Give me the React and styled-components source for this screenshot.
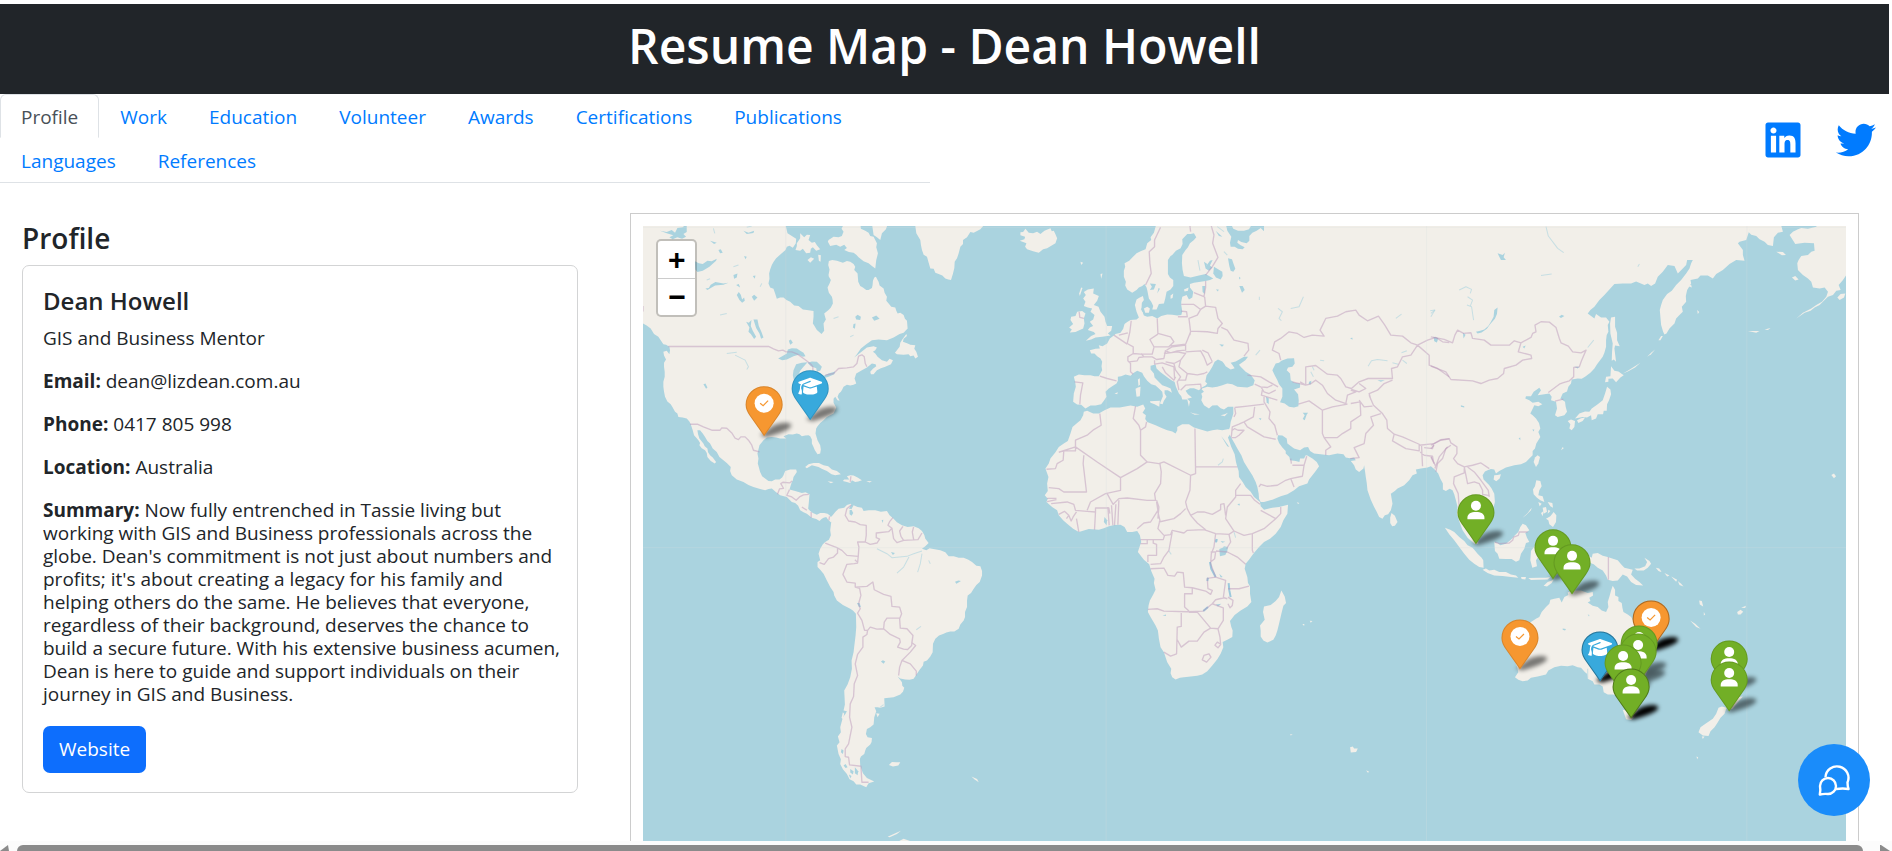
import React from "react";
import styled, { createGlobalStyle } from "styled-components";

import { FaLinkedin, FaTwitter } from "react-icons/fa";
import { FaGraduationCap } from "react-icons/fa6";

const GlobalStyle = createGlobalStyle`
  *,
  *::before,
  *::after {
    box-sizing: border-box;
  }

  body {
    margin: 0;
    background-color: #fff;
    color: #212529;
    font-family: "Segoe UI", "Open Sans", "Noto Sans", sans-serif;
    font-size: 19px;
    line-height: 23px;
  }
`;

const Page = styled.div`
  display: flex;
  flex-direction: column;
  height: 100vh;
  overflow: hidden;
`;

const Header = styled.header`
  flex: none;
  margin: 4px 3px 0 0;
  padding: 12px 0 18px;
  background-color: #212529;
  color: #fff;
  text-align: center;
`;

const Title = styled.h1`
  margin: 0;
  font-size: 48px;
  font-weight: 600;
  line-height: 60px;
`;

const TopBar = styled.div`
  display: flex;
  flex: none;
  align-items: flex-start;
  justify-content: space-between;
`;

const Tabs = styled.nav`
  display: flex;
  flex-wrap: wrap;
  width: calc(50% - 16px);
  border-bottom: 1px solid #dee2e6;
`;

const Tab = styled.a`
  height: 44px;
  padding: 11px 20px 9px;
  border: 1px solid ${({ $active }) => ($active ? "#dee2e6" : "transparent")};
  border-bottom-color: transparent;
  border-radius: 6px 6px 0 0;
  color: ${({ $active }) => ($active ? "#495057" : "#007bff")};
  text-decoration: none;
`;

const Social = styled.div`
  display: flex;
  gap: 33px;
  padding: 26px 16px 0 0;
`;

const SocialLink = styled.a`
  display: flex;
  color: #007bff;
  font-size: 40px;
`;

const Main = styled.main`
  display: grid;
  flex: 1;
  grid-template-columns: 1fr 2fr;
  min-height: 0;
  padding: 30px 3px 0 0;
  overflow: hidden;
`;

const Sidebar = styled.section`
  padding: 6px 52px 0 22px;
`;

const SectionTitle = styled.h3`
  margin: 0 0 8px;
  font-size: 28px;
  font-weight: 600;
  line-height: 38px;
`;

const Card = styled.article`
  padding: 20px 12px 19px 20px;
  border: 1px solid #d3d4d5;
  border-radius: 7px;
`;

const CardTitle = styled.h5`
  margin: 0 0 11px;
  font-size: 24px;
  font-weight: 600;
  line-height: 30px;
`;

const Text = styled.p`
  margin: 0 0 20px;
`;

const WebsiteButton = styled.a`
  display: inline-block;
  padding: 12px 16px;
  border-radius: 7px;
  background-color: #0d6efd;
  color: #fff;
  text-decoration: none;
`;

const MapPanel = styled.section`
  margin-right: 30px;
  padding: 12px;
  border: 1px solid #ccc;
  border-bottom: 0;
  overflow: hidden;
`;

const MapCanvas = styled.div`
  position: relative;
  background-color: #aad3df;

  > svg {
    display: block;
    width: 100%;
  }
`;

const ZoomControl = styled.div`
  position: absolute;
  top: 13px;
  left: 13px;
  display: flex;
  flex-direction: column;
  border: 2px solid rgba(0, 0, 0, 0.2);
  border-radius: 5px;
  background-clip: padding-box;
  background-color: #fff;
`;

const ZoomButton = styled.button`
  width: 37px;
  height: 37px;
  padding: 4px 0 0 1px;
  border: 0;
  background: none;
  color: #000;
  font: bold 30px/32px "Liberation Mono", monospace;
  cursor: pointer;

  & + & {
    border-top: 1px solid #ccc;
  }
`;

const ChatButton = styled.button`
  position: fixed;
  right: 22px;
  bottom: 35px;
  display: flex;
  align-items: center;
  justify-content: center;
  width: 72px;
  height: 72px;
  padding: 0;
  border: 0;
  border-radius: 50%;
  background-color: #1a8cfa;
  cursor: pointer;
`;

const ScrollTrack = styled.div`
  display: flex;
  flex: none;
  align-items: flex-end;
  justify-content: space-between;
  height: 10px;
  padding: 0 2px 0 0;
  background-color: #fcfcfc;

  svg {
    flex: none;
  }
`;

const ScrollThumb = styled.div`
  flex: 1;
  height: 6px;
  margin: 0 17px 0 8px;
  border-radius: 6px 6px 0 0;
  background-color: #8b8b8b;
`;

const tabs = [
  "Profile",
  "Work",
  "Education",
  "Volunteer",
  "Awards",
  "Certifications",
  "Publications",
  "Languages",
  "References",
];

const details = [
  { label: "Email", value: "dean@lizdean.com.au" },
  { label: "Phone", value: "0417 805 998" },
  { label: "Location", value: "Australia" },
  {
    label: "Summary",
    value:
      "Now fully entrenched in Tassie living but working with GIS and Business professionals across the globe. Dean's commitment is not just about numbers and profits; it's about creating a legacy for his family and helping others do the same. He believes that everyone, regardless of their background, deserves the chance to build a secure future. With his extensive business acumen, Dean is here to guide and support individuals on their journey in GIS and Business.",
  },
];

// Each region keeps its own origin, in thirds of a map pixel
const regions = [
  {
    name: "north-america",
    origin: [-69, -78],
    land: [
      "69 70 495 70 502 100 515 108 528 116 527 130 518 143 508 137 500 140 496 150 490 155 478 166 468 175 460 186 455 195 450 208 447 220 448 236 445 250 450 262 460 266 465 280 470 296 480 292 490 292 499 300 510 305 522 316 535 318 548 328 560 330 580 333 580 350 578 370 582 376 590 390 604 402 612 392 610 370 617 358 614 348 612 340 625 330 632 322 638 310 637 298 635 290 626 278 622 262 628 250 632 240 626 230 625 225 628 208 624 195 626 183 636 180 650 182 668 188 680 183 690 185 700 192 705 200 702 210 712 220 714 245 720 258 728 262 738 270 745 270 755 264 757 255 758 242 762 232 767 230 772 240 775 245 778 256 790 265 793 278 800 290 798 302 805 310 813 320 825 322 828 332 832 340 840 338 850 345 854 356 860 362 862 385 850 398 838 402 820 412 800 420 775 418 755 420 738 432 722 445 710 462 702 472 720 458 740 442 760 438 770 442 765 450 758 455 765 460 772 470 785 480 800 485 808 476 818 480 812 492 795 500 782 504 770 510 760 522 752 522 750 515 758 506 768 498 766 492 755 490 740 502 725 510 708 520 703 535 708 550 700 554 690 556 680 554 670 560 666 568 662 575 656 580 652 590 658 602 652 600 645 590 640 596 640 608 648 622 644 632 640 640 628 646 620 650 610 660 600 668 592 678 588 685 586 700 592 720 600 735 602 748 600 760 592 762 584 750 580 740 575 730 575 718 570 708 565 705 555 706 545 708 538 702 530 700 518 703 505 702 490 708 498 715 480 715 468 712 455 710 440 712 430 720 418 735 412 760 415 775 413 790 420 815 426 828 435 835 445 842 455 843 465 838 478 838 486 832 490 825 495 812 510 808 528 808 530 815 520 830 518 840 514 848 508 868 525 872 545 878 556 876 568 882 566 905 564 925 570 932 578 938 590 943 600 938 612 938 622 940 628 945 636 955 632 966 625 960 618 950 610 952 604 956 598 962 588 956 575 952 560 940 550 936 540 930 534 916 525 908 515 905 500 890 480 885 468 876 455 865 445 866 435 870 420 866 400 860 385 854 370 845 350 838 335 825 330 812 332 800 320 788 310 780 298 770 290 755 278 745 270 730 262 722 255 710 248 700 240 690 232 690 234 702 238 715 250 730 254 738 262 745 264 756 270 765 278 772 288 785 284 790 272 782 262 770 260 758 255 750 245 744 238 735 240 728 235 720 228 712 222 705 218 690 212 672 208 664 200 655 188 652 175 650 172 640 165 635 158 622 152 612 142 604 135 590 132 575 130 560 130 545 134 530 134 515 132 500 132 488 138 478 132 466 130 455 140 452 148 462 150 450 148 440 138 434 130 432 122 420 115 410 102 402 92 385 80 376 69 370",
      "858 402 860 408 850 416 848 425 862 430 870 434 885 435 882 446 888 455 893 470 885 475 880 466 870 468 865 462 850 464 830 462 824 458 838 440 840 428 846 418",
      "625 120 640 110 655 112 665 108 668 100 670 95 664 86 672 70 720 70 722 86 735 92 745 98 750 108 760 110 770 130 768 142 773 160 768 180 765 205 755 198 745 190 730 184 715 172 708 164 700 158 686 156 672 150 680 144 672 134 660 140 648 134 630 138 623 125",
      "540 100 552 112 560 104 570 105 565 120 575 128 584 126 590 136 600 148 588 152 578 142 572 146 570 158 558 160 548 146 540 152 526 150 530 138 530 130 540 115",
      "755 70 803 70 797 88 785 100 780 120 770 112 760 105",
      "884 70 1095 70 1080 88 1060 98 1050 96 1040 112 1028 120 1028 132 1020 140 1015 160 1010 175 1003 185 1002 204 998 220 992 240 984 238 975 235 966 226 955 222 945 218 940 206 930 205 925 188 920 170 910 164 905 150 902 136 900 120 888 100",
      "555 800 565 792 580 788 596 788 610 795 624 798 635 808 650 812 662 822 645 825 634 822 620 812 606 806 595 800 575 795 560 804",
      "680 828 690 825 700 826 712 832 725 840 714 844 705 845 695 840 690 848 680 845 668 842 672 838 687 838",
      "622 843 640 845 632 849",
      "738 842 755 843 748 847",
      "562 180 572 172 582 176 570 188",
      "594 164 602 166 601 185 596 182",
      "758 470 775 474 770 478",
    ],
    water: [
      "474 475 486 468 500 460 503 448 515 444 530 445 540 452 550 458 556 468 548 470 535 464 520 468 500 478 486 480",
      "522 545 518 525 520 510 528 492 545 488 562 486 550 500 540 512 532 530 534 545 528 560 522 560",
      "562 488 575 484 590 485 605 500 600 512 590 514 588 504 572 498",
      "608 528 625 520 645 514 642 522 625 530 610 534",
      "378 365 386 368 394 360 392 378 398 392 408 410 402 417 392 402 385 395 388 382",
      "400 358 412 358 416 378 424 396 430 412 423 416 418 400 408 384",
      "225 184 236 190 248 192 262 182 275 184 290 176 288 182 268 200 248 212 232 216 226 208",
      "256 265 266 264 272 254 286 246 310 250 325 248 310 254 285 256 262 270",
      "120 92 140 96 155 90 165 98 172 84 188 82 200 70 200 96 190 102 198 110 186 116 172 112 158 118 148 112 160 106 140 100",
      "250 552 256 550 262 562 258 566",
      "350 285 356 276 362 284 366 298 372 292 374 302 366 308 358 300",
      "395 290 402 284 412 292 402 302",
      "506 422 512 418 518 428 510 434",
      "705 350 712 344 722 350 720 360 708 358",
      "755 352 768 346 778 356 762 362",
      "700 372 706 370 704 386 698 382",
      "370 92 385 98 402 92 400 99 380 102",
      "295 150 302 148 308 158 300 160",
      "270 122 290 128 282 132",
      "372 168 380 170 376 178",
      "340 225 352 220 350 232 342 236",
      "398 228 406 226 404 236",
      "348 255 356 252 360 262",
      "688 936 694 930 699 938 694 946 688 942",
    ],
    borders:
      "M145 439H445L460 446 475 452 488 450 498 455 515 455 532 462 550 475 562 484 572 492 578 500V515M615 525L640 520 655 505 680 503 700 500 710 490 715 468 725 464 732 470 735 490 740 500M210 672L232 672 250 680 275 690 300 690 305 683 320 684 335 698 345 714 355 718 362 710 375 710 385 720 395 735 400 750 418 755M472 882L478 866 490 864 482 850 488 846 508 848 516 842M508 868L500 885 515 890 528 900 538 890 550 884 566 882M545 920L560 930M573 935V952M628 948L626 960M69 318V334M692 828L690 845",
    rivers:
      "M320 460L350 456M345 465L375 480 385 500 380 508M690 410L700 405M640 355L655 350M300 345L320 340M340 200L355 195M260 240L270 236M420 260L425 250M280 85L284 100M395 78L380 82",
  },
  {
    name: "south-america",
    origin: [-69, 822],
    land: [
      "633 66 630 52 638 44 645 35 655 25 672 22 680 14 692 10 693 14 686 25 694 26 700 15 712 20 725 22 730 32 745 30 765 30 782 34 800 32 808 45 820 55 830 66 845 75 862 80 880 78 895 84 905 92 912 104 915 115 925 128 915 138 905 145 918 150 928 144 935 145 960 150 975 156 985 168 1000 168 1015 172 1030 172 1044 178 1055 185 1068 196 1080 198 1085 212 1085 225 1078 245 1068 254 1060 265 1052 278 1042 285 1040 300 1040 320 1034 335 1034 350 1030 360 1020 372 1015 385 1002 393 990 393 978 396 970 400 956 405 945 415 938 430 937 455 930 468 920 480 910 484 908 495 898 508 890 520 880 535 868 538 855 537 840 534 832 528 845 545 846 556 852 562 848 574 840 582 820 590 806 592 792 593 793 618 780 622 772 620 763 620 768 632 762 650 760 672 750 680 740 685 737 700 742 710 755 712 754 724 750 732 738 742 735 750 732 760 722 768 719 775 720 795 728 818 740 832 762 843 745 848 738 860 720 852 708 852 700 842 688 836 680 820 668 806 660 790 662 776 655 760 650 735 658 725 653 708 662 695 660 680 668 650 676 640 680 632 670 630 674 612 673 590 672 570 682 552 690 530 695 505 694 480 700 455 703 430 706 405 708 380 707 340 698 330 690 325 668 314 650 300 642 285 640 275 630 260 620 240 610 220 600 208 592 200 592 185 600 180 595 160 600 145 608 132 615 125 626 118 632 105 630 90",
      "806 793 815 784 828 785 840 785 834 795 818 798",
      "1053 828 1070 835 1075 845 1062 836",
      "802 1008 820 1000 842 990 830 1000 808 1010",
      "838 1020 850 1014 872 1022 860 1030 840 1030",
      "668 635 672 640 668 656 664 652",
      "768 638 778 640 772 650",
    ],
    water: [
      "688 30 694 28 699 38 694 46 688 42",
      "782 483 788 479 795 483 790 490",
      "710 308 718 308 722 320 716 320",
      "812 155 824 158 818 164",
      "670 795 676 790 682 800 676 802",
      "690 805 700 812 698 822 690 816",
      "704 800 714 812 712 824 704 818",
      "664 745 670 750 668 760 662 755",
      "686 822 694 826 690 834",
      "1004 244 1014 240 1022 242 1008 250",
      "784 60 789 58 788 68",
    ],
    borders:
      "M693 14L680 25 675 45 685 62 705 65 720 73 738 75 738 105 735 125 712 125 716 140 714 168 712 188 702 190 680 192 668 222 680 245 705 248 705 260 740 258 758 245 762 268 790 282 812 288 815 318 838 320 844 340 838 355 840 383 860 385 878 405 874 430M735 125L750 132 770 128 778 116 768 112 768 98 805 94 815 84 803 75 808 64 818 52M815 84L820 115 830 127 850 120 893 118 905 98M848 78L838 92 842 108 850 120M880 80L876 95 880 118M615 128L650 142 665 150 680 165 714 168M704 178L712 186M652 142L652 158 640 170 625 175 612 192 598 187M705 260L718 264 722 285 715 310 720 325 712 338 725 360 733 390 742 390 750 380 770 386 790 385 792 365 800 353 838 353M790 385L810 402 838 415 840 425 832 440 850 446 862 447 874 435 878 405M874 426L886 435 870 455 845 480 838 500 835 525M845 480L870 490 888 512 888 525M742 390L740 402 728 410 728 440 712 462 705 490 712 525 702 550 700 588 690 610 688 650 695 680 685 730 675 745 675 768 685 770 688 793 722 797 725 845 745 845",
    rivers:
      "M770 145L800 160 815 172 860 168 880 160 905 152M830 218L850 200 866 170M892 215L900 190 905 160M925 180L930 190M888 388L902 378M780 620L790 612",
  },
  {
    name: "africa",
    origin: [1161, -78],
    land: [
      "170 632 188 640 205 640 222 630 240 622 268 622 300 616 320 620 338 613 344 625 336 638 346 645 344 656 350 665 375 675 395 684 410 690 425 694 435 700 440 690 440 680 455 672 475 672 490 682 510 688 530 694 545 690 560 688 575 690 594 686 600 700 592 712 602 740 612 762 616 785 620 800 624 812 625 830 636 845 645 860 660 874 670 890 688 905 690 918 700 928 725 922 745 920 772 913 770 940 758 960 750 980 735 1000 718 1015 700 1025 685 1040 668 1060 655 1078 645 1090 642 1105 650 1130 652 1148 658 1158 658 1180 662 1205 650 1218 630 1230 612 1244 598 1262 602 1280 606 1290 605 1310 590 1318 576 1325 578 1340 570 1360 560 1376 545 1395 530 1412 515 1422 500 1426 480 1428 460 1430 448 1432 435 1437 425 1430 420 1418 422 1405 410 1385 400 1355 390 1340 385 1315 382 1290 375 1275 360 1250 352 1235 354 1215 358 1200 368 1182 375 1168 370 1148 372 1135 362 1112 356 1092 340 1078 322 1055 326 1042 332 1025 328 1005 320 992 305 995 290 995 282 980 270 973 252 974 235 978 220 984 205 988 175 986 145 995 128 985 110 970 98 960 85 945 80 930 65 920 48 905 52 895 43 885 52 872 50 850 54 830 45 805 55 790 60 775 75 756 85 740 100 730 112 722 120 700 126 680 140 668 150 660 158 645 160 635",
      "752 1170 762 1188 766 1208 758 1216 752 1240 745 1270 740 1290 735 1305 728 1318 710 1326 698 1320 690 1308 690 1290 688 1275 702 1258 697 1235 700 1218 720 1214 735 1202 745 1190",
      "815 1271 821 1271 820 1277",
      "837 1261 845 1262 840 1267",
      "958 1640 966 1638 970 1644 981 1644 976 1654 960 1656",
      "1006 1710 1014 1712 1012 1717",
      "778 1601 786 1602 780 1605",
      "798 906 806 908 802 911",
    ],
    water: [
      "566 1046 576 1042 580 1038 592 1040 590 1052 584 1064 568 1068",
      "572 708 580 718 596 740 590 738",
      "396 1245 406 1242 406 1247",
      "552 1020 560 1016 560 1024",
      "570 1022 584 1024 575 1027",
      "620 911 628 910 626 916",
      "566 1120 576 1130 570 1131",
      "222 950 230 960 228 975 220 965",
      "556 1212 572 1210 562 1218",
    ],
    borders:
      "M208 640L212 675 190 688 170 705 135 720V752H100L98 780 80 790 75 805 48 807M85 756L135 740 200 785 270 832 320 805 350 785M160 765L158 790 168 875H100L85 865 55 862M315 618L308 655 325 675 330 690 345 680 348 665M330 690V765L350 785 385 790 400 785 480 825 495 820 493 685M495 800H620M270 832V870L225 880 180 905 170 930M230 880L238 895 248 912 265 895 290 893 350 900 375 900 372 880 390 850 392 815 388 790M265 900L262 973M480 825L478 870 465 905 470 925 480 945M378 900L385 920 382 955M385 965L430 955 450 940 465 925M480 945L500 935 520 935 545 942 570 928 570 912 580 910 585 945M480 945L500 968 525 988M382 935L388 960 382 985 400 1005M630 850L615 870 615 890 590 920 585 955 610 992M615 885L660 885 672 900 688 912M690 930L735 955 700 985 665 1000 640 1005 610 992M750 920V940L735 955M665 1000V1050L668 1058M50 894H78M50 904L78 898M62 910L110 905 130 912 135 930 170 933 195 935 195 923 235 923 238 940M85 942L102 933 115 945 108 955M115 945L122 962 128 950 138 935M138 955L145 995M195 935L192 988M232 920L236 975M243 915L247 975M256 912L252 975M378 905L382 930 360 965 340 968 320 985M330 1018L398 1018 402 1005 420 1003 425 990 460 998 470 990 520 988 555 1000 595 1002 610 992M425 995L415 1050 400 1070 390 1090 360 1092M330 1030H350V1018M368 1020V1028L378 1032V1065H352L352 1085M555 1000L550 1040 542 1060 540 1090 555 1130 530 1134 532 1165 545 1170 540 1182 525 1172 485 1162 462 1160 458 1117 440 1115 432 1127 412 1125 400 1103 360 1105M485 1162V1180H462L462 1220 475 1232M352 1227L380 1225 400 1232 470 1234 518 1232 530 1222 545 1210M452 1238V1278L440 1280 438 1360 420 1367 400 1355M440 1318L452 1340 475 1322 500 1322 520 1295 540 1283 500 1235M475 1236L500 1236M545 1210L578 1222 578 1260 562 1285 540 1283M562 1285L568 1310 570 1332 562 1342 553 1334 560 1325 568 1330M545 1210L555 1198 580 1192 590 1195M555 1130L585 1140 578 1192M592 1165L625 1165 655 1157M592 1190L607 1200 605 1215 598 1222 592 1210M540 1055L555 1055 552 1075 540 1085M556 1052L590 1055 620 1070 645 1092M595 1002L600 1025 588 1045M515 1378L520 1365 535 1360 541 1370 528 1385Z",
    rivers: "M562 795L575 785 578 775M610 995L615 1012M415 1052L422 1062",
    lakes:
      "M538 1085L542 1105 555 1130M532 1132L530 1142M594 1148L596 1170 600 1190M518 1232L532 1220M558 1016L556 1026",
  },
  {
    name: "eurasia-west",
    origin: [1161, -78],
    land: [
      "378 70 370 98 360 112 362 120 350 130 345 148 330 154 318 160 306 172 296 182 282 190 284 200 280 212 280 230 286 245 284 256 290 268 305 278 318 270 325 262 335 258 342 252 348 262 350 270 355 295 362 305 368 318 365 328 378 328 385 312 400 310 404 295 408 275 420 268 428 258 428 240 418 232 412 222 412 198 412 180 420 168 425 165 436 152 450 145 456 132 455 118 470 102 480 102 490 100 497 112 490 120 478 130 472 142 465 150 455 165 454 190 456 210 460 228 480 232 505 226 525 222 548 235 538 240 525 243 505 246 490 248 478 252 478 262 488 275 485 292 475 298 468 285 455 290 452 305 452 315 455 335 452 345 440 346 425 344 410 343 392 348 380 355 365 348 350 350 340 346 336 336 330 332 333 322 334 308 340 300 337 288 325 294 318 298 313 315 318 335 325 352 318 358 300 360 290 366 282 372 278 386 270 398 255 402 245 410 238 415 230 430 216 438 205 435 208 445 195 446 178 450 182 460 192 460 200 468 210 475 215 485 213 498 215 510 205 528 192 528 180 525 162 525 145 523 130 530 134 545 136 560 130 580 128 605 140 613 152 614 165 625 180 616 195 616 212 612 220 602 228 590 225 575 234 566 245 558 258 550 262 542 262 530 272 528 285 523 300 527 310 518 320 512 335 518 340 528 350 542 362 552 375 556 385 565 395 575 397 588 392 600 388 610 396 612 400 602 408 590 402 580 402 570 412 570 424 578 420 565 408 560 395 555 380 540 372 532 370 520 360 508 360 497 375 493 378 505 390 516 400 524 415 535 425 542 432 545 436 560 445 580 452 588 455 598 470 598 475 620 478 604 470 596 484 592 472 582 465 572 478 564 490 564 505 570 514 562 525 556 530 550 524 545 528 525 536 515 545 500 552 485 562 478 575 484 580 490 585 498 600 508 612 504 606 495 600 488 615 484 640 470 652 470 644 480 625 494 630 500 645 515 660 524 672 540 668 555 650 562 620 560 605 552 590 550 575 555 560 560 545 562 530 560 512 566 520 575 512 580 515 590 512 600 520 615 535 625 545 616 560 615 570 624 580 628 592 620 608 620 608 640 605 650 600 665 598 680 594 690 598 705 605 718 612 730 620 745 632 765 640 785 652 805 665 825 675 845 680 860 684 880 685 895 690 905 700 905 725 898 750 888 770 882 790 870 805 858 830 850 835 838 845 825 855 812 865 798 858 785 845 775 830 766 825 765 820 775 808 775 806 785 795 782 778 780 776 770 765 760 765 752 755 742 745 728 740 715 742 705 755 706 768 715 770 730 790 745 808 750 820 742 832 740 838 752 850 760 870 762 895 765 920 760 938 762 945 772 958 774 970 772 975 780 960 782 970 795 975 808 985 815 998 805 1000 795 1003 815 1005 830 1008 850 1010 870 1020 898 1030 920 1038 935 1045 950 1055 955 1062 945 1072 942 1080 930 1085 910 1080 880 1092 872 1100 865 1120 855 1135 840 1145 825 1158 820 1155 808 1170 805 1190 802 1200 798 1210 806 1222 820 1228 835 1236 850 1236 868 1245 872 1262 862 1262 70",
      "172 268 190 265 188 280 205 288 200 302 190 315 204 320 210 335 222 350 225 365 230 378 245 378 242 392 232 400 240 406 215 410 195 412 182 418 166 422 182 408 195 402 190 396 172 390 178 382 188 378 178 365 188 358 192 345 180 335 185 325 172 322 160 318 165 305 158 295 166 285 160 276",
      "140 335 155 333 165 340 160 355 162 370 158 385 148 390 135 396 118 397 124 388 116 382 128 372 120 360 122 350 135 348",
      "-30 97 -22 96 -15 86 -5 98 8 100 20 95 30 102 42 92 60 85 64 94 70 92 76 105 80 115 75 130 50 145 38 148 25 158 8 154 -10 148 -16 140 -12 130 -32 122 -18 118 -16 110 -30 106",
      "322 538 328 534 328 552 324 558",
      "315 566 322 562 330 560 328 588 318 590",
      "358 603 388 602 386 620 372 612 360 608",
      "478 636 490 640 508 642 492 644",
      "570 645 582 642 592 638 582 648",
      "340 325 350 320 358 325 355 338 344 338",
      "326 332 332 328 336 338 328 340",
      "420 286 428 280 426 294 420 296",
      "460 268 474 262 472 272 462 274",
      "150 185 158 188 152 195",
      "210 222 216 220 212 236",
      "152 262 156 264 148 288 146 280",
      "1082 938 1092 946 1100 965 1092 976 1084 978 1078 968 1078 952",
      "252 580 262 576 260 582",
    ],
    water: [
      "585 70 700 70 700 94 690 84 678 92 665 98 656 108 656 122 648 130 632 126 622 120 620 128 630 136 642 142 636 148 622 146 612 140 600 140 598 128 602 110 590 92",
      "735 490 745 488 752 482 770 475 790 474 792 490 785 500 772 502 768 510 778 520 780 540 792 548 808 550 808 562 790 568 802 582 804 600 803 618 790 622 775 620 762 610 748 606 755 590 755 565 745 552 740 540 732 525 725 510 730 500",
      "550 200 560 206 575 215 576 228 570 238 556 232 548 220",
      "592 175 604 178 608 190 614 206 608 215 600 212 596 198",
      "555 92 575 110 565 108",
      "520 185 530 192 525 200 538 182 546 180 538 196 545 202 535 212 525 205",
      "358 250 376 252 370 268 358 270 364 260",
      "384 264 388 266 380 280",
      "515 258 524 258 522 282 516 276",
      "626 258 636 258 642 270 634 278",
      "835 545 842 542 840 552 834 552",
      "816 638 832 638 828 643 822 660 816 656 822 645",
      "1208 410 1222 414 1218 428 1210 420",
      "1040 540 1062 540 1050 545",
      "706 590 714 594 714 612 708 606",
      "556 268 564 268 562 274",
      "566 432 580 434 574 440",
      "684 654 692 654 690 660",
      "958 416 964 412 966 418",
      "625 230 630 234 626 238",
    ],
    islands: ["600 70 665 70 655 88 640 92 622 92 608 86"],
    borders:
      "M390 82L372 120V140L356 155 358 190 362 220 345 255M478 78L480 95M542 78L550 105 546 130 562 172 545 200 525 225M525 243V262L520 290 490 278M522 290L525 318 510 328 490 313 452 313M452 333L468 335 470 350 442 350M510 328L500 345 475 355 480 395M525 318L555 322 562 355 575 370 562 385 560 400 530 395 480 393 478 405M572 382L590 390 610 420 652 430 654 450 640 468M380 355L382 400 420 410 430 425 415 440 395 440 370 440 358 418 382 402M415 438L465 432 472 415 480 395M408 450L425 440 465 435V450L440 452 420 458 405 452M302 362L298 395 290 430 308 440 308 460 330 462 365 462 370 442M250 405L290 432M265 405L292 398M308 460L292 470 292 482 300 490 300 515 308 522M295 485L320 482 325 472 340 470 332 460M340 470L365 470 378 478 400 475 405 450M400 460L440 455 465 460 450 480 430 490 405 485M465 455L510 452 520 470 530 495 545 485M450 480L445 500 470 520 500 524 520 520 530 515M515 450L532 458 545 485M372 480V492L395 488 430 500 432 535M395 500L405 518 430 540 435 530M430 490L435 510 450 530 440 545 445 570M470 520L465 540 445 540M450 570L465 555 510 552 512 566M208 528L230 535 258 542M132 545L157 548 150 585 148 612M146 335L148 352 160 355M650 525L690 530 715 545 742 560M672 552L690 560 710 562 725 555M692 562L700 575 715 580 735 570M695 570L692 585 740 600M700 585V605L718 635 715 655 732 675 740 705M612 622L650 618 700 612M610 650L615 640 612 622M672 620L668 650 640 665 625 672 605 680 602 710M640 665L650 680 700 710 735 717M605 690L612 685 622 690 640 690 625 705 615 712 602 712M685 860L690 852 710 858 740 855 765 840 780 835 815 828 820 795 785 795M780 775L782 790M820 795L828 768M780 835L790 860M750 480L745 460 725 450 732 425 750 415 775 395 800 400 820 412 845 405 880 408 868 390 885 355 920 348 945 335 975 330 985 345 1010 362 1043 348 1062 375 1080 405 1115 408 1140 428 1160 435 1140 465 1115 470 1100 500 1082 505 1085 535 1012 535 985 545 962 565 945 560 930 535 920 525 890 522 855 496 825 500 825 555 808 545M785 545L825 555 838 552 855 540 875 555 890 580 915 600 950 612M803 612L835 602 875 630 905 620 950 612M945 610L950 585 975 575 960 570M962 568L985 575 1005 565 985 550M985 600L1000 620 1025 618M875 630V700L880 712 900 740 885 750V765M880 712H920L935 700 960 685 960 665 990 645 988 605 960 610M1050 640L1020 650 1028 675 1005 700 1000 730 970 742 985 772 958 775M1015 585L1028 615 1055 640 1068 660 1070 685 1090 702 1115 710 1165 732V752L1125 745 1085 722 1090 702M1085 540L1060 550 1040 570 1015 580 1020 598M1165 735L1210 730 1230 720 1260 715M1172 735L1175 798M1168 755L1180 765 1205 768 1208 785M1180 742L1205 745 1208 732M1202 770L1215 800M1212 805L1225 770 1250 740M1160 435L1195 465 1195 495 1220 505 1262 535M1160 435L1190 420 1215 412 1235 425 1262 428",
    rivers:
      "M1012 498L1022 482 1040 478 1070 482M1085 488L1102 492M742 325L755 335 745 355 752 362M780 325L805 320 818 290M675 465L688 450M845 500L850 510M840 515L848 530M868 480L880 482M1112 458L1128 452M1115 480L1128 490M1095 355L1112 342M1198 332L1212 330 1200 350M686 290V300M560 80L580 95M580 155L590 165M502 180L508 212",
  },
  {
    name: "asia-east",
    origin: [2361, -78],
    land: [
      "55 70 55 865 65 870 70 882 75 900 80 920 78 940 84 960 95 990 110 1012 130 1030 142 1030 142 1005 125 985 105 955 100 925 130 905 160 945 185 930 192 905 190 880 182 865 175 855 158 838 155 825 162 814 170 810 180 806 190 808 195 820 205 812 225 802 250 795 270 792 285 785 295 775 305 765 305 752 312 745 316 730 328 710 322 695 328 685 324 668 315 655 305 645 298 640 304 628 310 615 322 618 334 612 322 605 305 608 295 600 283 595 285 588 300 588 308 575 325 563 330 570 320 585 340 582 355 580 362 590 360 600 375 605 378 625 372 645 380 650 400 645 408 635 404 620 402 605 388 596 395 580 408 574 412 560 420 550 422 538 440 535 452 536 462 530 478 518 490 505 498 492 515 470 520 458 525 440 525 420 527 405 532 395 530 375 535 365 525 352 510 352 495 342 490 355 470 340 478 330 490 320 505 300 520 285 535 268 550 252 575 250 600 250 615 244 640 255 650 250 660 258 672 250 680 230 695 215 710 195 730 198 740 220 752 208 765 195 768 180 785 180 780 190 775 205 765 220 750 240 735 255 722 272 708 282 695 300 690 315 686 330 688 352 690 375 696 395 700 403 706 400 715 385 730 370 735 355 745 345 755 335 752 320 765 305 764 288 768 270 780 250 778 240 800 235 808 226 830 226 845 235 855 222 875 210 895 192 915 180 940 182 935 165 935 150 920 130 925 125 945 120 950 105 955 90 965 70",
      "960 70 1048 70 1055 95 1040 98 1028 112 1025 138 1010 135 1000 125 985 118 975 108 960 104 952 96",
      "1085 95 1100 88 1110 84 1130 86 1155 80 1160 70 1245 70 1245 225 1235 240 1222 255 1228 270 1215 272 1205 285 1190 290 1180 300 1165 315 1150 322 1138 332 1120 338 1095 355 1115 338 1140 325 1155 315 1172 305 1185 290 1190 275 1180 262 1165 265 1145 262 1140 245 1130 235 1115 225 1100 210 1098 190 1102 180 1110 168 1130 165 1140 155 1150 152 1148 130 1120 128 1092 132 1075 105",
      "1218 292 1228 282 1242 280 1238 292 1225 300",
      "1035 155 1055 156 1064 165 1052 166",
      "1082 232 1092 228 1102 238 1092 241",
      "540 352 552 350 552 380 558 398 558 420 566 438 552 436 550 445 555 485 548 478 542 482 543 455 545 430 538 400 537 370",
      "540 498 550 512 562 514 578 525 568 532 555 546 545 535 532 536 532 545 522 546 525 530 538 528",
      "528 560 538 568 540 582 534 600 528 612 527 632 518 632 516 642 500 642 495 655 482 660 480 645 468 652 455 650 432 655 445 640 462 634 475 635 482 625 500 612 515 600 522 580",
      "410 662 420 658 432 662 430 680 422 690 415 685 418 672",
      "438 660 450 654 462 652 455 662 442 668",
      "320 765 327 770 322 790 315 800 308 785 312 772",
      "190 825 200 824 210 822 206 835 196 843 188 838",
      "316 840 328 842 332 858 325 870 322 885 335 888 340 905 328 900 318 892 308 882 306 868 312 858",
      "322 905 332 910 326 918",
      "350 905 364 908 366 922 358 918",
      "335 922 345 920 348 934 338 940",
      "330 938 338 932 335 948",
      "352 928 358 932 350 940",
      "345 955 358 948 368 935 376 945 375 965 366 980 355 972 352 960",
      "275 952 290 938 302 922 300 930 285 945",
      "575 520 590 512 615 496 628 488 612 502 590 514",
      "648 470 660 458 672 448 660 462",
      "682 420 690 408 695 408 688 420",
      "770 258 780 254 782 262",
      "798 330 804 336 800 342",
      "1200 824 1208 820 1214 828 1208 834",
      "950 393 985 393 975 398",
      "1000 388 1018 384 1010 390",
      "390 750 395 740 398 744",
    ],
    water: [
      "135 395 148 392 160 388 172 378 180 365 188 350 190 330 200 322 198 342 192 356 178 372 168 386 152 397 140 400",
      "90 615 100 618 100 622 90 620",
      "384 350 392 344 400 348 390 354",
      "275 440 284 436 280 445",
      "96 398 104 404 98 415",
      "200 160 215 165 222 158 218 172 225 180 210 180",
      "10 415 20 420 12 426",
      "263 714 268 712 268 720",
      "304 688 310 688 308 694",
      "430 500 445 500 440 505",
    ],
    borders:
      "M0 410L40 418 65 428 72 405 80 390 98 400 120 398 125 415 160 420 180 435 235 435 250 422 270 428 262 455 300 465 302 475 275 480 255 495 220 505 218 520 200 535 175 540 150 550 125 542 60 538 45 515 0 498M270 428L300 412 305 400 315 395 312 375 330 365 355 366 375 382 385 415 390 428 412 438 425 455 450 458 465 450 452 480 445 500 428 502V530L415 542 395 548 385 552 352 577M372 603L397 597M0 735L30 718 55 715 60 728 78 740 78 760 68 775 80 790 100 800 125 795 150 788 175 805M60 735L45 745 35 775 20 790 15 815M100 805L100 818 70 830 68 850 82 880 85 925M100 800L110 850 130 845 145 850 155 870 155 882 172 885M110 800L130 815 150 840 172 870 175 890M0 770L10 790M0 745L10 735M130 900L145 890",
    rivers:
      "M345 80L352 108 380 145 398 158M85 270L105 260 122 268 118 280M110 290L125 300 118 318M108 315L122 320 128 360M0 340L12 330M620 200L625 192M330 226L362 222M470 442L488 420",
  },
  {
    name: "oceania",
    origin: [2361, 762],
    land: [
      "42 142 58 148 70 155 85 170 100 182 110 195 125 202 140 220 152 232 157 240 158 262 145 260 130 250 115 238 100 220 85 200 70 180 55 162",
      "155 268 165 264 175 270 190 268 205 275 225 275 240 282 255 285 262 292 240 290 215 287 190 285 170 278",
      "270 290 285 290 283 297 272 296",
      "292 293 325 292 345 292 358 290 350 297 320 298 300 299",
      "338 316 350 305 368 298 362 308 348 318",
      "190 186 200 188 208 195 225 190 240 178 252 165 262 155 268 140 275 130 285 135 295 150 283 158 288 172 295 185 285 188 280 205 270 220 265 240 255 244 242 236 225 236 205 235 200 220 192 212",
      "300 212 312 196 320 205 345 205 362 190 355 212 330 222 340 240 330 245 320 232 315 240 318 258 304 262 298 240",
      "375 215 382 225 378 235",
      "440 215 460 212 470 225 482 232 485 220 500 218 515 226 530 230 548 236 560 240 570 252 580 262 605 268 600 282 612 295 625 305 636 315 615 314 600 305 588 288 575 282 560 300 545 302 530 298 525 285 515 270 500 262 488 252 470 245",
      "610 264 625 264 642 258 648 245 640 232 655 242 660 250 650 262 638 270 618 270",
      "674 262 684 264 692 275 682 272",
      "700 278 715 285 708 288",
      "720 288 738 298 735 304",
      "740 302 750 310 757 318 745 314",
      "804 360 812 362 816 378 806 372",
      "818 395 822 402 818 405",
      "777 420 792 430 808 445 795 440",
      "918 395 928 388 936 394 928 402 920 402",
      "930 382 944 376 942 383",
      "300 425 315 415 325 410 332 395 345 380 355 370 358 358 370 355 385 352 392 366 400 350 412 344 410 336 425 330 450 330 470 338 485 335 486 345 475 352 478 362 470 366 485 376 500 380 512 390 525 395 532 380 530 365 536 345 540 330 545 316 552 328 552 345 562 350 562 362 572 368 574 382 577 395 590 402 600 410 608 425 615 440 640 460 660 482 668 510 665 535 655 560 640 590 628 610 620 635 600 640 575 640 560 645 545 642 530 642 518 635 515 618 505 612 490 612 485 602 470 595 468 580 462 575 450 562 440 560 425 554 410 557 390 556 370 560 352 570 345 582 320 588 300 592 290 600 275 602 262 598 252 590 262 575 258 558 250 535 240 515 238 500 232 485 235 470 242 455 250 445 265 440 285 435",
      "862 682 872 678 886 682 880 700 868 712 858 728 850 740 838 752 832 766 815 765 802 755 808 740 825 728 845 715 855 700",
      "812 768 820 768 815 775",
      "895 640 915 650 935 648 920 665 905 685 890 688",
      "575 688 598 692 622 688 612 708 600 718 585 716",
      "796 828 801 830 798 836",
    ],
    water: ["395 444 405 446 402 450 395 448", "470 402 475 404 474 408"],
    borders:
      "M192 185L205 190 235 188 245 180 248 170 262 165 265 155 290 155M532 230V298",
    rivers: "M470 565V595",
  },
];

const GREEN = "#72af26";
const BLUE = "#38a9dc";
const ORANGE = "#f69730";

const pins = [
  { x: 121, y: 160, color: ORANGE, icon: "check" },
  { x: 167, y: 144, color: BLUE, icon: "school" },
  { x: 832, y: 268, color: GREEN, icon: "person" },
  { x: 909, y: 303, color: GREEN, icon: "person" },
  { x: 928, y: 318, color: GREEN, icon: "person" },
  { x: 876, y: 393, color: ORANGE, icon: "check" },
  { x: 1007, y: 374, color: ORANGE, icon: "check", stacked: true },
  { x: 956, y: 405, color: BLUE, icon: "school", stacked: true },
  { x: 995, y: 399, color: GREEN, icon: "person" },
  { x: 994, y: 407, color: GREEN, icon: "person" },
  { x: 979, y: 418, color: GREEN, icon: "person" },
  { x: 987, y: 442, color: GREEN, icon: "person", stacked: true },
  { x: 1085, y: 414, color: GREEN, icon: "person" },
  { x: 1085, y: 435, color: GREEN, icon: "person" },
];

const PinIcon = ({ icon, color }) => {
  if (icon === "check") {
    return (
      <>
        <circle cy="17" r="9.5" fill="#fff" />
        <path
          d="M-4 17L-1 19.500L4 14.500"
          fill="none"
          stroke={color}
          strokeWidth="1.2"
        />
      </>
    );
  }
  if (icon === "school") {
    return <FaGraduationCap x="-12" y="4" size={24} color="#fff" />;
  }
  return (
    <g fill="#fff">
      <circle cy="11.5" r="5" />
      <path d="M-8.5 25V23.500C-8.500 19.500 -5 17.800 0 17.800S8.500 19.500 8.500 23.500V25Z" />
    </g>
  );
};

const Pin = ({ x, y, color, icon, stacked }) => (
  <g transform={`translate(${x} ${y})`}>
    <path
      d="M-4 49L8 40C14 36 27 35 27 39C27 43 16 47 2 51Z"
      fill="#000"
      opacity={stacked ? 1 : 0.5}
      filter="url(#pin-shadow)"
    />
    <path
      d="M0 50L-14 30Q-18.500 24 -18.500 18.500A18.500 18.500 0 0 1 18.500 18.500Q18.500 24 14 30Z"
      fill={color}
    />
    <path
      d="M0 49L-13.500 30Q-18 24 -18 18.500A18 18 0 0 1 18 18.500Q18 24 13.500 30Z"
      fill="none"
      stroke="#000"
      strokeOpacity={stacked ? 0.3 : 0.12}
    />
    <PinIcon icon={icon} color={color} />
  </g>
);

const WorldMap = () => (
  <svg viewBox="0 0 1202 690" role="img" aria-label="World map">
    <defs>
      <filter id="pin-shadow" x="-30%" y="-50%" width="160%" height="200%">
        <feGaussianBlur stdDeviation="2" />
      </filter>
    </defs>
    <g transform="scale(0.33333)" strokeLinejoin="round">
      {regions.map(({ name, origin, land, water, islands = [], ...lines }) => (
        <g key={name} transform={`translate(${origin.join(" ")})`}>
          {land.map((points) => (
            <polygon key={points} points={points} fill="#f2efe9" />
          ))}
          {water.map((points) => (
            <polygon key={points} points={points} fill="#aad3df" />
          ))}
          {islands.map((points) => (
            <polygon key={points} points={points} fill="#f2efe9" />
          ))}
          <g fill="none">
            <path
              d={lines.rivers}
              stroke="#aad3df"
              strokeOpacity="0.6"
              strokeWidth="3"
            />
            {lines.lakes && (
              <path d={lines.lakes} stroke="#9cc9dd" strokeWidth="6" />
            )}
            <path
              d={lines.borders}
              stroke="#b591b5"
              strokeOpacity="0.45"
              strokeWidth="4"
            />
          </g>
        </g>
      ))}
      <path
        d="M428 0V2070M1388 0V2070M2348 0V2070M3308 0V2070M0 964H3606M0 4H3606"
        stroke="#d5dcdc"
        strokeOpacity="0.4"
        strokeWidth="2"
      />
    </g>
    {pins.map((pin) => (
      <Pin key={`${pin.x}-${pin.y}`} {...pin} />
    ))}
  </svg>
);

const ChatIcon = () => (
  <svg
    width="32"
    height="32"
    viewBox="0 0 32 32"
    fill="none"
    stroke="#fff"
    strokeWidth="2.4"
    strokeLinejoin="round"
  >
    <path d="M7.500 13A11.500 11.500 0 1 1 29.500 18.500Q29.500 22 30.500 25Q25 24 18 25" />
    <path d="M1.800 30.500Q2.800 26 2 22A8 8 0 1 1 10 30Q6 29.500 1.800 30.500Z" />
  </svg>
);

const App = () => {
  return (
    <>
      <GlobalStyle />
      <Page>
        <Header>
          <Title>Resume Map - Dean Howell</Title>
        </Header>
        <TopBar>
          <Tabs>
            {tabs.map((tab, index) => (
              <Tab key={tab} href={`#${tab.toLowerCase()}`} $active={index === 0}>
                {tab}
              </Tab>
            ))}
          </Tabs>
          <Social>
            <SocialLink href="#linkedin" aria-label="LinkedIn">
              <FaLinkedin />
            </SocialLink>
            <SocialLink href="#twitter" aria-label="Twitter">
              <FaTwitter />
            </SocialLink>
          </Social>
        </TopBar>
        <Main>
          <Sidebar>
            <SectionTitle>Profile</SectionTitle>
            <Card>
              <CardTitle>Dean Howell</CardTitle>
              <Text>GIS and Business Mentor</Text>
              {details.map(({ label, value }) => (
                <Text key={label}>
                  <strong>{label}:</strong> {value}
                </Text>
              ))}
              <WebsiteButton href="#website">Website</WebsiteButton>
            </Card>
          </Sidebar>
          <MapPanel>
            <MapCanvas>
              <WorldMap />
              <ZoomControl>
                <ZoomButton aria-label="Zoom in">+</ZoomButton>
                <ZoomButton aria-label="Zoom out">−</ZoomButton>
              </ZoomControl>
            </MapCanvas>
          </MapPanel>
        </Main>
        <ScrollTrack>
          <svg width="9" height="6" viewBox="0 0 9 6">
            <path d="M0 6L8 0L9 6Z" fill="#8b8b8b" />
          </svg>
          <ScrollThumb />
          <svg width="10" height="6" viewBox="0 0 10 6">
            <path d="M0 6V0H1L10 6Z" fill="#8b8b8b" />
          </svg>
        </ScrollTrack>
      </Page>
      <ChatButton aria-label="Open chat">
        <ChatIcon />
      </ChatButton>
    </>
  );
};

export default App;
